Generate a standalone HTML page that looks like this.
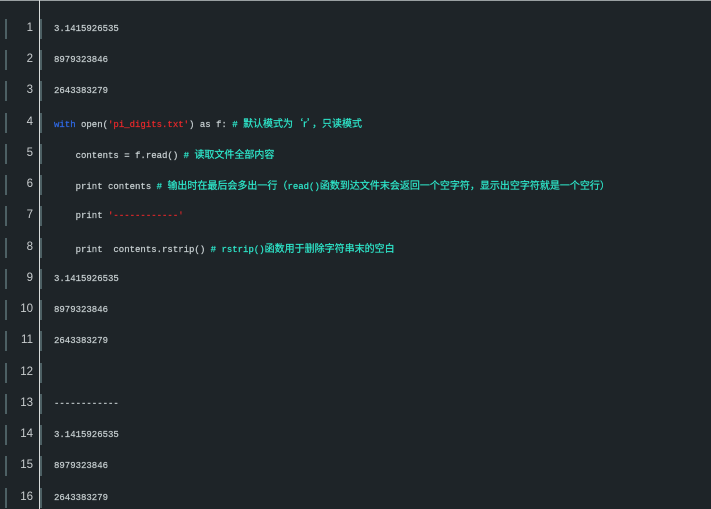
<!DOCTYPE html>
<html><head><meta charset="utf-8"><style>
body{margin:0;width:711px;height:509px;background:#1e2428;overflow:hidden;position:relative;font-family:"Liberation Mono","Noto Sans CJK SC",monospace;}
.top{position:absolute;left:0;top:0;width:711px;height:1px;background:#9aa0a2}
.vl{position:absolute;left:39px;top:0;width:1px;height:509px;background:#d8dcdc}
.row{position:absolute;left:0;width:711px;height:20px}
.b1{position:absolute;left:5px;top:0;width:2px;height:20px;background:#4d6064}
.b2{position:absolute;left:40px;top:0;width:2px;height:20px;background:#4d6064}
.n{position:absolute;left:0;width:33px;text-align:right;top:3px;font:11.5px "Liberation Sans",sans-serif;color:#c8ccce}
.t{position:absolute;left:54px;top:4px;font-size:9px;color:#c8d0d2;white-space:pre;line-height:12px;-webkit-text-stroke:0.2px currentColor}
.z{font-size:10px;font-family:"Noto Sans CJK SC",sans-serif}
.k{color:#2f6ae8}.s{color:#e8282a}.c{color:#2ee8cc}
</style></head><body>
<div class="top"></div><div class="vl"></div>
<div class="row" style="top:19px"><div class="b1"></div><div class="b2"></div><div class="n">1</div><div class="t">3.1415926535</div></div>
<div class="row" style="top:50px"><div class="b1"></div><div class="b2"></div><div class="n">2</div><div class="t">8979323846</div></div>
<div class="row" style="top:81px"><div class="b1"></div><div class="b2"></div><div class="n">3</div><div class="t">2643383279</div></div>
<div class="row" style="top:113px"><div class="b1"></div><div class="b2"></div><div class="n">4</div><div class="t"><span class="k">with</span> open(<span class="s">'pi_digits.txt'</span>) as f: <span class="c"># <span class="z">默认模式为‘r’，只读模式</span></span></div></div>
<div class="row" style="top:144px"><div class="b1"></div><div class="b2"></div><div class="n">5</div><div class="t">    contents = f.read() <span class="c"># <span class="z">读取文件全部内容</span></span></div></div>
<div class="row" style="top:175px"><div class="b1"></div><div class="b2"></div><div class="n">6</div><div class="t">    print contents <span class="c"># <span class="z">输出时在最后会多出一行（</span>read()<span class="z">函数到达文件末会返回一个空字符，显示出空字符就是一个空行）</span></span></div></div>
<div class="row" style="top:206px"><div class="b1"></div><div class="b2"></div><div class="n">7</div><div class="t">    print <span class="s">'------------'</span></div></div>
<div class="row" style="top:238px"><div class="b1"></div><div class="b2"></div><div class="n">8</div><div class="t">    print  contents.rstrip() <span class="c"># rstrip()<span class="z">函数用于删除字符串末的空白</span></span></div></div>
<div class="row" style="top:269px"><div class="b1"></div><div class="b2"></div><div class="n">9</div><div class="t">3.1415926535</div></div>
<div class="row" style="top:300px"><div class="b1"></div><div class="b2"></div><div class="n">10</div><div class="t">8979323846</div></div>
<div class="row" style="top:331px"><div class="b1"></div><div class="b2"></div><div class="n">11</div><div class="t">2643383279</div></div>
<div class="row" style="top:363px"><div class="b1"></div><div class="b2"></div><div class="n">12</div><div class="t"></div></div>
<div class="row" style="top:394px"><div class="b1"></div><div class="b2"></div><div class="n">13</div><div class="t">------------</div></div>
<div class="row" style="top:425px"><div class="b1"></div><div class="b2"></div><div class="n">14</div><div class="t">3.1415926535</div></div>
<div class="row" style="top:456px"><div class="b1"></div><div class="b2"></div><div class="n">15</div><div class="t">8979323846</div></div>
<div class="row" style="top:488px"><div class="b1"></div><div class="b2"></div><div class="n">16</div><div class="t">2643383279</div></div>
</body></html>
